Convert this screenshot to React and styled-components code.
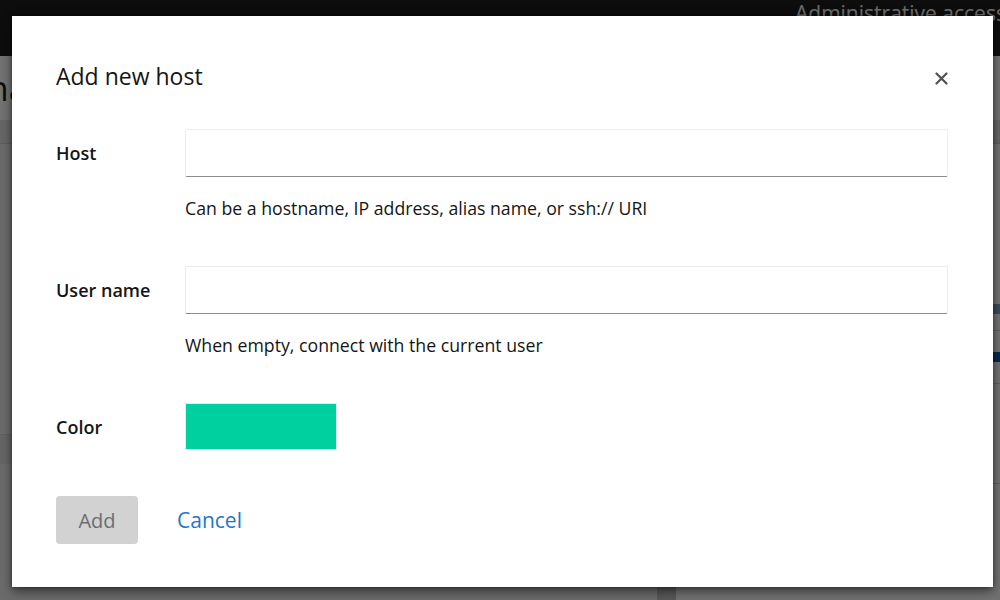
import styled, { createGlobalStyle } from "styled-components";

const GlobalStyle = createGlobalStyle`
  html, body {
    margin: 0;
    padding: 0;
    width: 1000px;
    height: 600px;
    overflow: hidden;
    font-family: "Open Sans", "Liberation Sans", sans-serif;
    color: #151515;
  }
  * {
    box-sizing: border-box;
  }
`;

// the page sitting behind the dialog
const Page = styled.div`
  position: relative;
  width: 1000px;
  height: 600px;
  display: flex;
  flex-direction: column;
  background: #f0f0f0;
  overflow: hidden;
`;

const TopBar = styled.header`
  height: 56px;
  flex-shrink: 0;
  background: #1b1b1b;
  display: flex;
  justify-content: flex-end;
`;

const TopBarText = styled.span`
  width: 205px;
  font-size: 21px;
  line-height: 26px;
  color: #f0f0f0;
  white-space: nowrap;
  overflow: hidden;
`;

const PageHeader = styled.div`
  background: #fff;
  height: 64px;
  display: flex;
  align-items: center;
  overflow: hidden;
`;

const PageTitle = styled.h1`
  margin: 0 0 0 -104px;
  font-size: 34px;
  font-weight: 400;
  white-space: nowrap;
`;

const Tabs = styled.div`
  height: 24px;
  background: #e4e4e4;
  border-bottom: 1px solid #d2d2d2;
`;

const Content = styled.div`
  flex: 1;
  display: grid;
  grid-template-columns: 657px 19px 1fr;
`;

const LeftPane = styled.div`
  padding-top: 290px;
`;

const LeftBand = styled.div`
  height: 30px;
  background: #e2e2e2;
  border-top: 1px solid #d2d2d2;
`;

const Divider = styled.div`
  background: #c4c4c4;
`;

const RightPane = styled.div`
  background: #fff;
  padding-top: 160px;
  display: flex;
  flex-direction: column;
`;

const ListItem = styled.div`
  height: ${(p) => p.$h}px;
  border-bottom: 1px solid #d2d2d2;
  display: flex;
  align-items: ${(p) => (p.$top ? "flex-start" : "center")};
`;

const Marker = styled.div`
  height: 10px;
  width: 100%;
  background: ${(p) => p.$color};
`;

const Backdrop = styled.div`
  position: absolute;
  inset: 0;
  background: rgba(3, 3, 3, 0.56);
`;

// the dialog
const Modal = styled.div`
  position: absolute;
  left: 12px;
  top: 16px;
  width: 981px;
  height: 571px;
  background: #fff;
  box-shadow: 0 4px 10px rgba(0, 0, 0, 0.55), 0 0 3px rgba(0, 0, 0, 0.3);
  padding: 44px 45px 0 44px;
  display: flex;
  flex-direction: column;
`;

const ModalHeader = styled.div`
  display: flex;
  justify-content: space-between;
  align-items: center;
  height: 32px;
`;

const Title = styled.h2`
  margin: 0;
  font-size: 23px;
  font-weight: 400;
  line-height: 32px;
  color: #151515;
`;

const CloseButton = styled.button`
  border: none;
  background: none;
  padding: 0;
  margin-right: -1px;
  margin-top: 4px;
  width: 16px;
  height: 16px;
  display: flex;
  align-items: center;
  justify-content: center;
  cursor: pointer;
`;

const Form = styled.div`
  margin-top: 37px;
  display: flex;
  flex-direction: column;
  gap: 47px;
`;

const Field = styled.div`
  display: grid;
  grid-template-columns: 129px 1fr;
  align-items: start;
`;

const Label = styled.label`
  height: ${(p) => p.$h}px;
  display: flex;
  align-items: center;
  font-size: 18px;
  font-weight: 600;
  color: #151515;
`;

const Control = styled.div`
  display: flex;
  flex-direction: column;
  gap: 20px;
`;

const Input = styled.input`
  height: 48px;
  width: 100%;
  border: 1px solid #ededed;
  border-bottom-color: #8a8d90;
  border-radius: 2px;
  padding: 0 12px;
  font-family: inherit;
  font-size: 17px;
  outline: none;
`;

const Helper = styled.div`
  font-size: 17.7px;
  line-height: 22px;
  color: #151515;
`;

const Swatch = styled.div`
  width: 152px;
  height: 47px;
  background: ${(p) => p.$color};
  border: 1px solid #e8e8e8;
`;

const Footer = styled.div`
  margin-top: 46px;
  display: flex;
  align-items: center;
  gap: 39px;
`;

const PrimaryButton = styled.button`
  width: 82px;
  height: 48px;
  border: none;
  border-radius: 4px;
  background: #d2d2d2;
  color: #6a6e73;
  font-family: inherit;
  font-size: 20px;
`;

const LinkButton = styled.button`
  border: none;
  background: none;
  padding: 0;
  color: #1f75cc;
  font-family: inherit;
  font-size: 21px;
  cursor: pointer;
`;

function App() {
  return (
    <>
      <GlobalStyle />
      <Page>
        <TopBar>
          <TopBarText>Administrative access</TopBarText>
        </TopBar>
        <PageHeader>
          <PageTitle>Terminal</PageTitle>
        </PageHeader>
        <Tabs />
        <Content>
          <LeftPane>
            <LeftBand />
          </LeftPane>
          <Divider />
          <RightPane>
            <ListItem $h={27} $top>
              <Marker $color="#7aa6d6" />
            </ListItem>
            <ListItem $h={53}>
              <Marker $color="#0b58b8" />
            </ListItem>
            <ListItem $h={100} />
          </RightPane>
        </Content>

        <Backdrop />

        <Modal role="dialog" aria-label="Add new host">
          <ModalHeader>
            <Title>Add new host</Title>
            <CloseButton aria-label="Close">
              <svg width="13" height="13" viewBox="0 0 13 13">
                <path
                  d="M1.5 1.5 L11.5 11.5 M11.5 1.5 L1.5 11.5"
                  stroke="#4f5255"
                  strokeWidth="2.2"
                  strokeLinecap="round"
                />
              </svg>
            </CloseButton>
          </ModalHeader>

          <Form>
            <Field>
              <Label $h={48}>Host</Label>
              <Control>
                <Input type="text" />
                <Helper>Can be a hostname, IP address, alias name, or ssh:// URI</Helper>
              </Control>
            </Field>
            <Field>
              <Label $h={48}>User name</Label>
              <Control>
                <Input type="text" />
                <Helper>When empty, connect with the current user</Helper>
              </Control>
            </Field>
            <Field>
              <Label $h={47}>Color</Label>
              <Control>
                <Swatch $color="#00cfa0" />
              </Control>
            </Field>
          </Form>

          <Footer>
            <PrimaryButton disabled>Add</PrimaryButton>
            <LinkButton>Cancel</LinkButton>
          </Footer>
        </Modal>
      </Page>
    </>
  );
}

export default App;
